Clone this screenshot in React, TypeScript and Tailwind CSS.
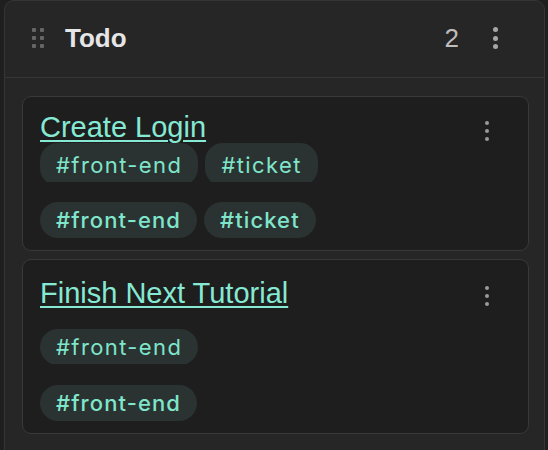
import React from "react";

const TEAL_TITLE = "text-[#86e9d3]";

function Kebab({ size, gap, color }: { size: number; gap: number; color: string }) {
  return (
    <div className="flex flex-col items-center" style={{ gap }}>
      {[0, 1, 2].map((i) => (
        <span key={i} className={`block rounded-full ${color}`} style={{ width: size, height: size }} />
      ))}
    </div>
  );
}

function Grip() {
  return (
    <div className="grid grid-cols-2 gap-x-[4px] gap-y-[4px] w-[12px]">
      {[0, 1, 2, 3, 4, 5].map((i) => (
        <span key={i} className="block w-[4px] h-[4px] rounded-[1px] bg-[#666666]" />
      ))}
    </div>
  );
}

function Tag({ label, pillH, bold }: { label: string; pillH: number; bold?: boolean }) {
  return (
    <div
      className={`flex items-center rounded-[18px] bg-[#2a3331] px-[16px] text-[22px] text-[#7fe5cb] leading-[24px] ${
        bold ? "font-medium tracking-[1.1px]" : "font-normal tracking-[1.4px]"
      }`}
      style={{ height: pillH, fontFamily: "Inter, 'Liberation Sans', sans-serif" }}
    >
      {label}
    </div>
  );
}

function TagRow({ tags, rowH, pillH, bold }: { tags: string[]; rowH: number; pillH: number; bold?: boolean }) {
  return (
    <div className="flex gap-[7px] overflow-hidden items-start" style={{ height: rowH }}>
      {tags.map((t) => (
        <Tag key={t} label={t} pillH={pillH} bold={bold} />
      ))}
    </div>
  );
}

export default function App() {
  return (
    <div
      className="w-[548px] h-[450px] bg-[#1f1f1f] overflow-hidden"
      style={{ fontFamily: "'Liberation Sans', Arial, sans-serif" }}
    >
      <div className="ml-[4px] w-[541px] h-[480px] rounded-t-[10px] border border-[#353535] bg-[#262626]">
        {/* header */}
        <div className="h-[77px] border-b border-[#363636] flex items-center pl-[27px] pr-[37px] pb-[2px]">
          <Grip />
          <div className="ml-[21px] text-[26px] font-bold text-[#e6e6e6] leading-[30px]">Todo</div>
          <div className="ml-auto text-[26px] text-[#bdbdbd] leading-[30px]">2</div>
          <div className="w-[24px] ml-[24px] flex justify-center">
            <Kebab size={5} gap={3.5} color="bg-[#a6a6a6]" />
          </div>
        </div>

        {/* list */}
        <div className="pt-[18px] pl-[17px] flex flex-col gap-[8px]">
          {/* card 1 */}
          <div className="w-[507px] rounded-[9px] border border-[#393939] bg-[#1e1e1e] pl-[17px] pr-[39px] pt-[14px] pb-[12px]">
            <div className="flex items-start h-[32px]">
              <div className={`flex-1 text-[29px] leading-[32px] underline underline-offset-[3px] decoration-[2px] ${TEAL_TITLE}`}>
                Create Login
              </div>
              <div className="mt-[10px]">
                <Kebab size={4} gap={4} color="bg-[#9a9a9a]" />
              </div>
            </div>
            <TagRow tags={["#front-end", "#ticket"]} rowH={39} pillH={43} />
            <div className="h-[20px]" />
            <TagRow tags={["#front-end", "#ticket"]} rowH={36} pillH={36} bold />
          </div>

          {/* card 2 */}
          <div className="w-[507px] rounded-[9px] border border-[#393939] bg-[#1e1e1e] pl-[17px] pr-[39px] pt-[17px] pb-[12px]">
            <div className="flex items-start h-[32px]">
              <div className={`flex-1 text-[29px] leading-[32px] underline underline-offset-[3px] decoration-[2px] ${TEAL_TITLE}`}>
                Finish Next Tutorial
              </div>
              <div className="mt-[9px]">
                <Kebab size={4} gap={4} color="bg-[#9a9a9a]" />
              </div>
            </div>
            <div className="h-[20px]" />
            <TagRow tags={["#front-end"]} rowH={35} pillH={36} />
            <div className="h-[21px]" />
            <TagRow tags={["#front-end"]} rowH={36} pillH={36} bold />
          </div>
        </div>
      </div>
    </div>
  );
}
